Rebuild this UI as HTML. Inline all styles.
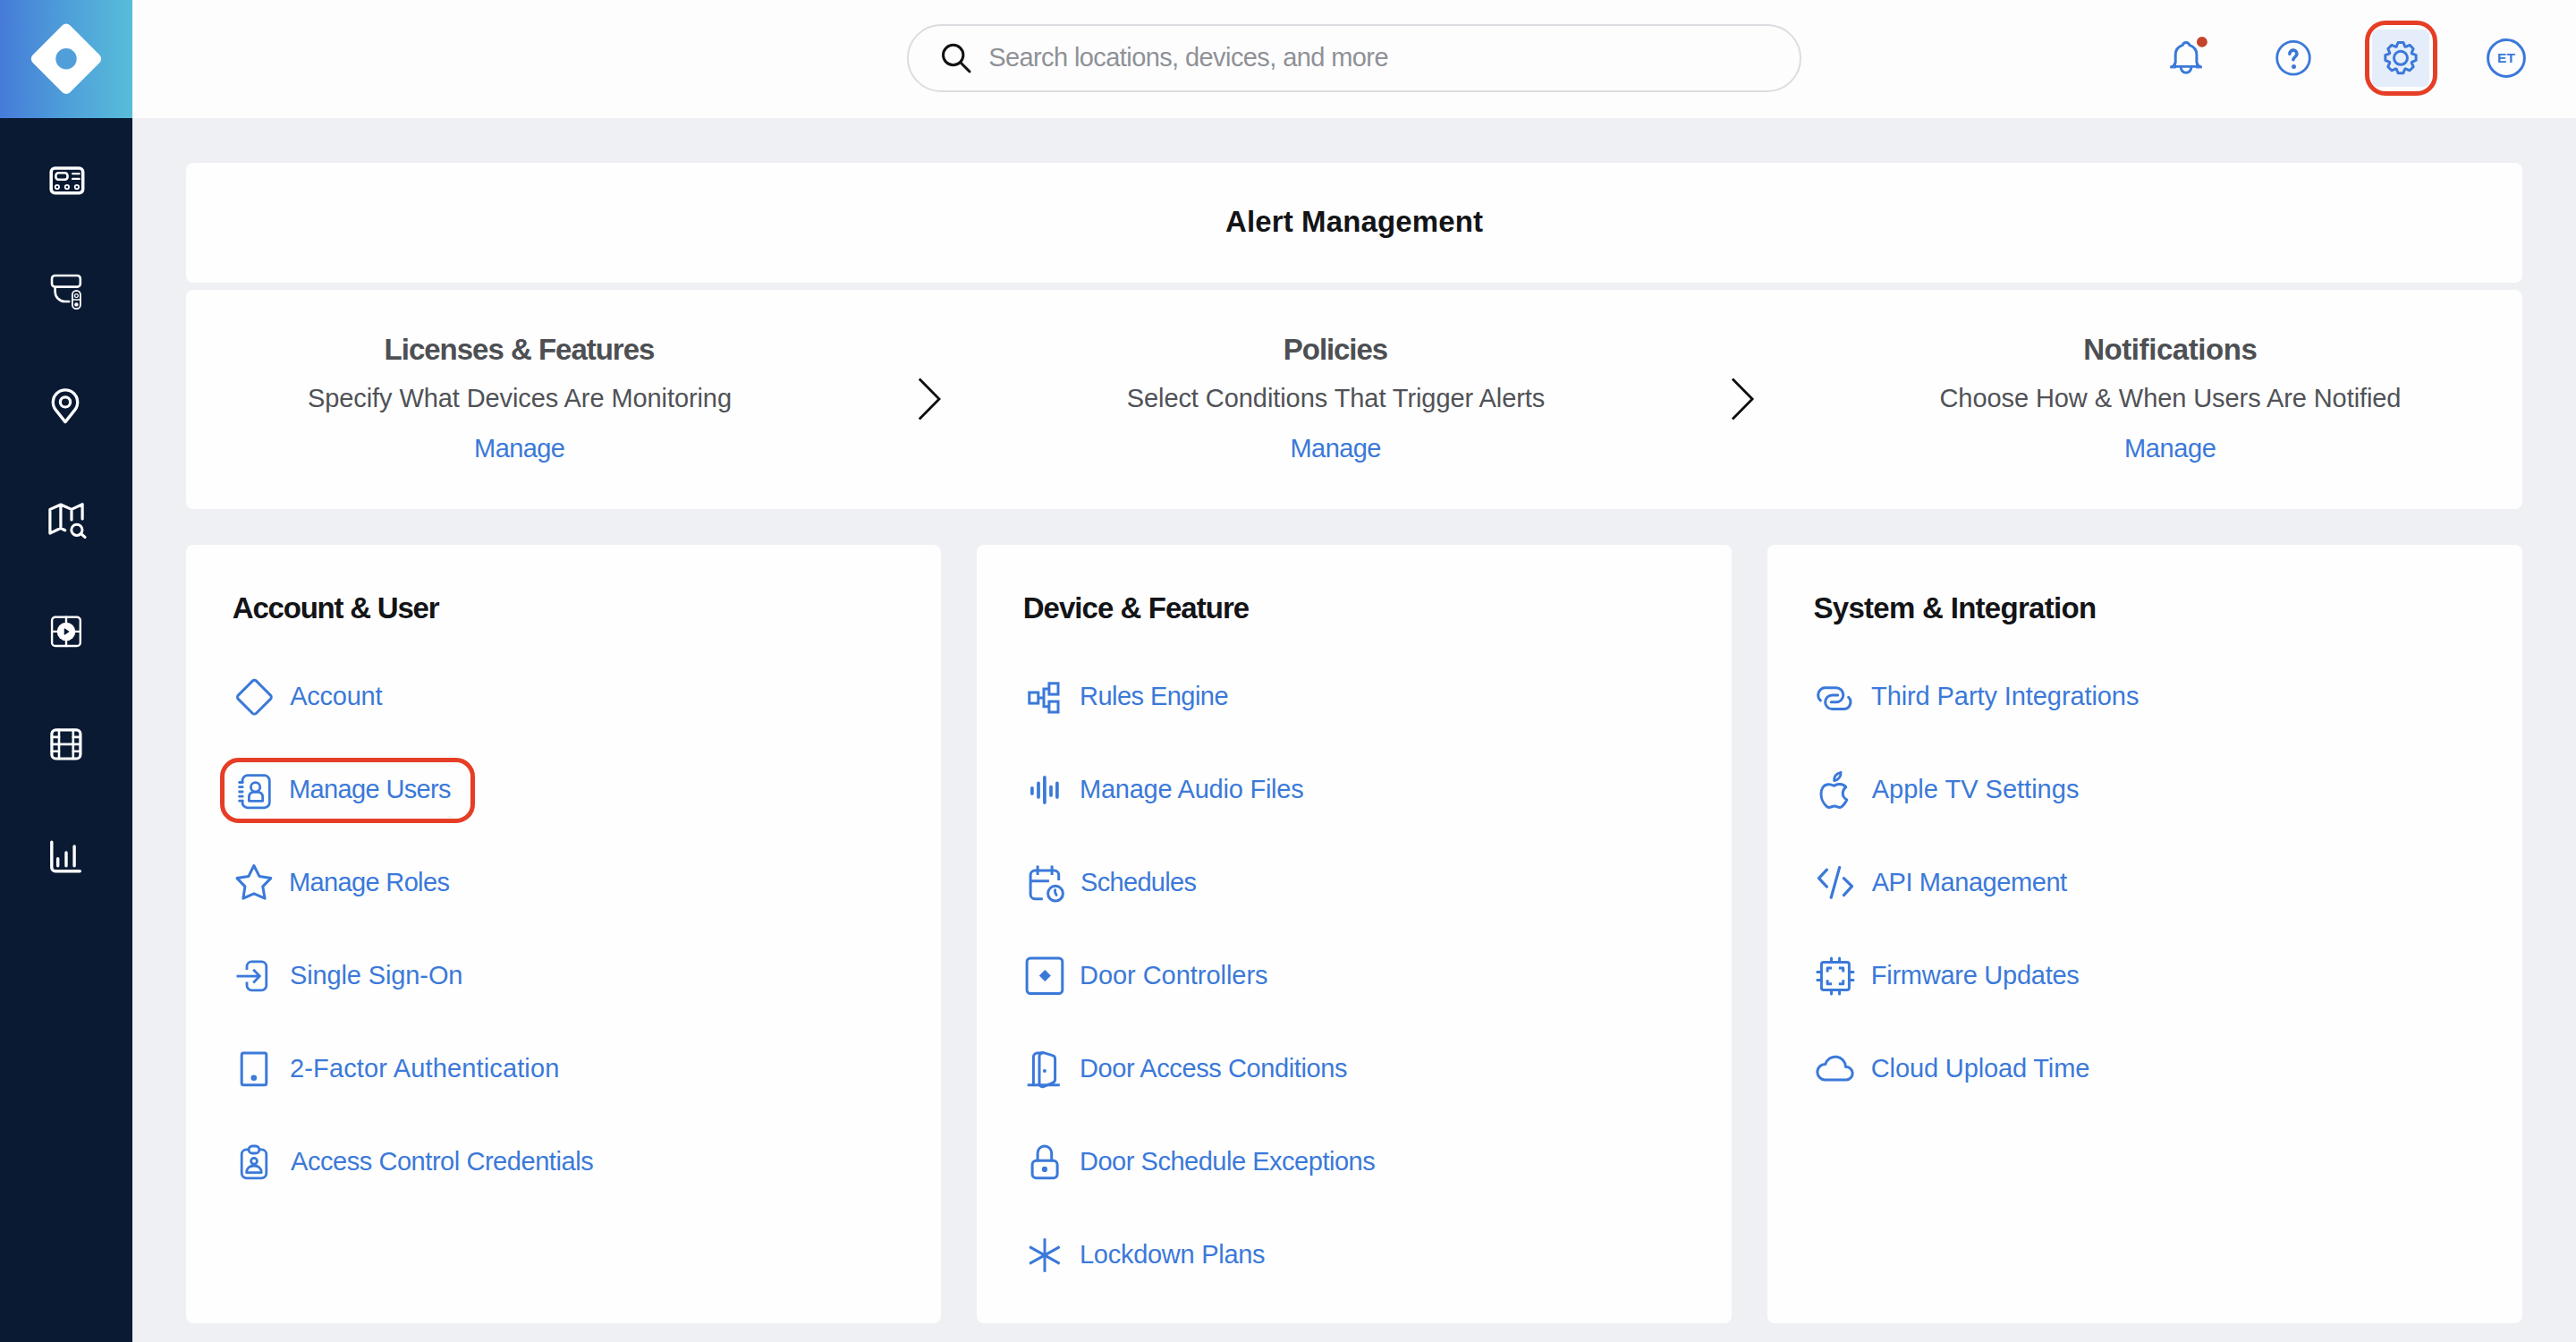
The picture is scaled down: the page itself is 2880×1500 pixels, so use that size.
<!DOCTYPE html>
<html><head><meta charset="utf-8">
<style>
*{box-sizing:border-box;margin:0;padding:0}
html,body{width:2880px;height:1500px;overflow:hidden}
body{position:relative;background:#eff0f3;font-family:"Liberation Sans",sans-serif}
.abs{position:absolute}
#side{left:0;top:0;width:148px;height:1500px;background:#0a1a33}
#logo{left:0;top:0;width:148px;height:132px;background:linear-gradient(90deg,#467bd9 0%,#4e9fd9 50%,#58bdd9 100%)}
#hdr{left:148px;top:0;width:2732px;height:132px;background:#fdfdfe}
#search{left:1014px;top:27px;width:1000px;height:76px;border:2px solid #dcdde1;border-radius:38px;background:#fdfdfe}
.ph{font-size:29px;line-height:29px;color:#8f9196;white-space:nowrap}
.card{background:#fefefe;border-radius:8px}
.t28{font-size:29px;line-height:29px;white-space:nowrap}
.b32{font-size:33px;line-height:33px;font-weight:700;white-space:nowrap}
.blue{color:#3b79d9}
.ctr{text-align:center}
svg{position:absolute;overflow:visible}
.si{fill:none;stroke:#fff;stroke-width:3;stroke-linecap:round;stroke-linejoin:round}
.bi{fill:none;stroke:#3b79d9;stroke-width:3;stroke-linecap:round;stroke-linejoin:round}
</style></head>
<body>
<!-- sidebar -->
<div id="side" class="abs"></div>
<div id="logo" class="abs"></div>
<svg style="left:0;top:0" width="148" height="132" viewBox="0 0 148 132">
  <path d="M74 32.6 L107.2 65.8 L74 99 L40.8 65.8 Z" fill="#fff" stroke="#fff" stroke-width="12" stroke-linejoin="round"/>
  <circle cx="74" cy="65.8" r="11.7" fill="#519fd9"/>
</svg>


<svg class="si" style="left:0;top:0" width="148" height="1000">
  <!-- 1 panel -->
  <rect x="57.2" y="188" width="35.5" height="27.8" rx="4.2" stroke-width="3.5"/>
  <rect x="62.4" y="193.3" width="13.1" height="7.5" rx="3" stroke-width="2.6"/>
  <line x1="81.2" y1="194.1" x2="88.6" y2="194.1" stroke-width="2.4"/>
  <line x1="81.2" y1="199.9" x2="88.6" y2="199.9" stroke-width="2.4"/>
  <circle cx="63.9" cy="209" r="2.2" stroke-width="1.8"/>
  <circle cx="74.9" cy="209" r="2.2" stroke-width="1.8"/>
  <circle cx="85.9" cy="209" r="2.2" stroke-width="1.8"/>
  <!-- 2 camera+doorbell -->
  <rect x="58" y="308" width="31.8" height="12.6" rx="3.4" stroke-width="2.6"/>
  <path d="M61.6 321 V326 A11 11 0 0 0 72.6 337 H77.2" stroke-width="2.6"/>
  <rect x="80.9" y="324.8" width="9" height="20.4" rx="4.5" stroke-width="1.8"/>
  <line x1="80.9" y1="335" x2="89.9" y2="335" stroke-width="1.3"/>
  <circle cx="85.4" cy="330.6" r="1.9" stroke-width="1.2"/>
  <circle cx="85.4" cy="340.4" r="2.2" fill="#fff" stroke="none"/>
  <!-- 3 pin -->
  <path d="M73 471.6 L62.28 458.13 A13.7 13.7 0 1 1 83.72 458.13 Z" stroke-width="3.3"/>
  <circle cx="73" cy="449.4" r="5.6" stroke-width="3.2"/>
  <!-- 4 map -->
  <path d="M55.9 569.4 L67.9 564 L80 569.4 L92.1 563.6 V579.9 M55.9 569.4 V596.1 L67.9 590.3 L72.7 592.7 M67.9 564 V590.3 M80 569.4 V581" stroke-width="3.2"/>
  <circle cx="85.9" cy="592.3" r="6.1" stroke-width="3"/>
  <line x1="90.5" y1="596.5" x2="95.1" y2="600.5" stroke-width="3"/>
  <!-- 5 video -->
  <rect x="58.1" y="689.8" width="31.7" height="32.2" rx="3.8" stroke-width="2.4"/>
  <line x1="74" y1="689.8" x2="74" y2="722" stroke-width="2.4"/>
  <line x1="58.1" y1="705.9" x2="89.8" y2="705.9" stroke-width="2.4"/>
  <circle cx="74" cy="705.9" r="10.25" fill="#fff" stroke="none"/>
  <path d="M72.3 703 L76.6 705.9 L72.3 708.9 Z" fill="#0a1a33" stroke="#0a1a33" stroke-width="1.2"/>
  <!-- 6 film -->
  <rect x="57.9" y="815.8" width="32" height="32.2" rx="4.5" stroke-width="3.2"/>
  <line x1="66" y1="815.8" x2="66" y2="848" stroke-width="2.6"/>
  <line x1="81.8" y1="815.8" x2="81.8" y2="848" stroke-width="2.6"/>
  <line x1="57.9" y1="831.9" x2="89.9" y2="831.9" stroke-width="2.6"/>
  <line x1="57.9" y1="823.9" x2="66" y2="823.9" stroke-width="2.6"/>
  <line x1="57.9" y1="839.7" x2="66" y2="839.7" stroke-width="2.6"/>
  <line x1="81.8" y1="823.9" x2="89.9" y2="823.9" stroke-width="2.6"/>
  <line x1="81.8" y1="839.7" x2="89.9" y2="839.7" stroke-width="2.6"/>
  <!-- 7 chart -->
  <path d="M57.8 941.3 V969.5 A4.2 4.2 0 0 0 62 973.7 H89.3" stroke-width="3.4"/>
  <line x1="64.7" y1="959.8" x2="64.7" y2="967.8" stroke-width="3.4"/>
  <line x1="74" y1="953" x2="74" y2="967.8" stroke-width="3.4"/>
  <line x1="83.1" y1="946" x2="83.1" y2="967.8" stroke-width="3.4"/>
</svg>

<!-- header -->
<div id="hdr" class="abs"></div>
<div id="search" class="abs"></div>
<svg style="left:0;top:0" width="2880" height="132">
  <circle cx="1065.7" cy="61.5" r="11.2" fill="none" stroke="#111" stroke-width="3"/>
  <line x1="1074.5" y1="70.5" x2="1084" y2="80" stroke="#111" stroke-width="3" stroke-linecap="round"/>
</svg>
<div class="abs ph" style="left:1105.20px;top:50.4px;letter-spacing:-0.592px">Search locations, devices, and more</div>

<!-- cards -->
<div class="abs card" style="left:208px;top:182px;width:2612px;height:134px"></div>
<div class="abs card" style="left:208px;top:324px;width:2612px;height:245px"></div>
<div class="abs card" style="left:208px;top:609px;width:844px;height:870px"></div>
<div class="abs card" style="left:1092px;top:609px;width:844px;height:870px"></div>
<div class="abs card" style="left:1976px;top:609px;width:844px;height:870px"></div>

<div class="abs b32 ctr" style="left:1214.07px;width:600px;top:230.90px;color:#131417;letter-spacing:0.133px">Alert Management</div>

<div class="abs b32 ctr" style="left:280.50px;width:600px;top:373.90px;color:#4d4f53;letter-spacing:-1.011px">Licenses &amp; Features</div>
<div class="abs t28 ctr" style="left:280.96px;width:600px;top:431.3px;color:#505257;letter-spacing:-0.088px">Specify What Devices Are Monitoring</div>
<div class="abs t28 ctr blue" style="left:280.70px;width:600px;top:487.30px;letter-spacing:-0.600px">Manage</div>

<div class="abs b32 ctr" style="left:1192.96px;width:600px;top:373.90px;color:#4d4f53;letter-spacing:-1.071px">Policies</div>
<div class="abs t28 ctr" style="left:1193.46px;width:600px;top:431.3px;color:#505257;letter-spacing:-0.070px">Select Conditions That Trigger Alerts</div>
<div class="abs t28 ctr blue" style="left:1193.22px;width:600px;top:487.30px;letter-spacing:-0.560px">Manage</div>

<div class="abs b32 ctr" style="left:2126.29px;width:600px;top:373.90px;color:#4d4f53;letter-spacing:-0.441px">Notifications</div>
<div class="abs t28 ctr" style="left:2126.46px;width:600px;top:431.3px;color:#505257;letter-spacing:-0.086px">Choose How &amp; When Users Are Notified</div>
<div class="abs t28 ctr blue" style="left:2126.31px;width:600px;top:487.30px;letter-spacing:-0.380px">Manage</div>

<svg style="left:0;top:0" width="2880" height="600">
  <polyline points="1027.8,423.5 1050,446 1027.8,468.5" fill="none" stroke="#0d0d0f" stroke-width="2.8"/>
  <polyline points="1936.9,423.5 1959.1,446 1936.9,468.5" fill="none" stroke="#0d0d0f" stroke-width="2.8"/>
</svg>

<!-- column headings -->
<div class="abs b32" style="left:259.80px;top:662.90px;color:#131417;letter-spacing:-1.216px">Account &amp; User</div>
<div class="abs b32" style="left:1143.70px;top:662.90px;color:#131417;letter-spacing:-0.953px">Device &amp; Feature</div>
<div class="abs b32" style="left:2027.50px;top:662.90px;color:#131417;letter-spacing:-0.711px">System &amp; Integration</div>

<!-- items col1 -->
<div class="abs t28 blue" style="left:324.20px;top:764.3px;letter-spacing:-0.234px">Account</div>
<div class="abs t28 blue" style="left:323.00px;top:868.3px;letter-spacing:-0.636px">Manage Users</div>
<div class="abs t28 blue" style="left:323.00px;top:972.3px;letter-spacing:-0.646px">Manage Roles</div>
<div class="abs t28 blue" style="left:324.00px;top:1076.3px;letter-spacing:-0.123px">Single Sign-On</div>
<div class="abs t28 blue" style="left:324.00px;top:1180.3px;letter-spacing:0.141px">2-Factor Authentication</div>
<div class="abs t28 blue" style="left:325.00px;top:1284.3px;letter-spacing:-0.444px">Access Control Credentials</div>

<!-- items col2 -->
<div class="abs t28 blue" style="left:1207.00px;top:764.3px;letter-spacing:-0.545px">Rules Engine</div>
<div class="abs t28 blue" style="left:1207.00px;top:868.3px;letter-spacing:-0.235px">Manage Audio Files</div>
<div class="abs t28 blue" style="left:1208.00px;top:972.3px;letter-spacing:-0.675px">Schedules</div>
<div class="abs t28 blue" style="left:1207.00px;top:1076.3px;letter-spacing:-0.040px">Door Controllers</div>
<div class="abs t28 blue" style="left:1207.00px;top:1180.3px;letter-spacing:-0.400px">Door Access Conditions</div>
<div class="abs t28 blue" style="left:1207.00px;top:1284.3px;letter-spacing:-0.479px">Door Schedule Exceptions</div>
<div class="abs t28 blue" style="left:1207.00px;top:1388.3px;letter-spacing:-0.277px">Lockdown Plans</div>

<!-- items col3 -->
<div class="abs t28 blue" style="left:2092.00px;top:764.3px;letter-spacing:-0.087px">Third Party Integrations</div>
<div class="abs t28 blue" style="left:2092.70px;top:868.3px;letter-spacing:0.006px">Apple TV Settings</div>
<div class="abs t28 blue" style="left:2092.70px;top:972.3px;letter-spacing:-0.431px">API Management</div>
<div class="abs t28 blue" style="left:2091.80px;top:1076.3px;letter-spacing:-0.260px">Firmware Updates</div>
<div class="abs t28 blue" style="left:2091.80px;top:1180.3px;letter-spacing:-0.131px">Cloud Upload Time</div>


<svg class="bi" style="left:0;top:0" width="2880" height="132" stroke-width="2.7">
  <!-- bell -->
  <path d="M2431 72.2 L2432.2 69.6 V61 C2432.2 55.5 2435.5 52 2440.3 50.3 A3.9 3.9 0 0 1 2447.8 50.3 C2452.6 52 2455.9 55.5 2455.9 61 V69.6 L2457.1 72.2"/>
  <path d="M2427.6 74.4 H2460.4" stroke-width="2.8"/>
  <path d="M2426.5 75.6 L2432.6 69.2 V75.6 Z M2461.5 75.6 L2455.5 69.2 V75.6 Z" fill="#3b79d9" stroke-width="1"/>
  <path d="M2438.3 75.5 A5.75 5.75 0 0 0 2449.8 75.5"/>
  <circle cx="2461.9" cy="46.9" r="5.95" fill="#c4432a" stroke="none"/>
  <!-- help -->
  <circle cx="2564" cy="64.75" r="18.3" stroke-width="2.8"/>
  <path d="M2559.9 60.3 A4 4 0 1 1 2567.6 61.6 C2566.8 63.3 2563.9 64.5 2563.9 66.8" stroke-width="3.6" stroke-linecap="round"/>
  <circle cx="2564.5" cy="74.4" r="2.5" fill="#3b79d9" stroke="none"/>
</svg>
<div class="abs" style="left:2644px;top:23px;width:81px;height:84px;border:5px solid #e63e26;border-radius:23px"></div>
<div class="abs" style="left:2652px;top:33px;width:64px;height:64px;background:#e4edf9;border-radius:7px"></div>
<svg class="bi" style="left:0;top:0" width="2880" height="132" stroke-width="2.8">
  <path d="M2679.20 52.09 L2681.13 47.44 L2686.87 47.44 L2688.80 52.09 L2689.45 52.36 L2694.10 50.43 L2698.17 54.50 L2696.24 59.15 L2696.51 59.80 L2701.16 61.73 L2701.16 67.47 L2696.51 69.40 L2696.24 70.05 L2698.17 74.70 L2694.10 78.77 L2689.45 76.84 L2688.80 77.11 L2686.87 81.76 L2681.13 81.76 L2679.20 77.11 L2678.55 76.84 L2673.90 78.77 L2669.83 74.70 L2671.76 70.05 L2671.49 69.40 L2666.84 67.47 L2666.84 61.73 L2671.49 59.80 L2671.76 59.15 L2669.83 54.50 L2673.90 50.43 L2678.55 52.36 Z"/>
  <circle cx="2684" cy="64.8" r="7.5"/>
  <circle cx="2802" cy="65" r="20.4" stroke-width="3"/>
</svg>
<div class="abs" style="left:2772px;top:57px;width:60px;text-align:center;font-size:15.5px;line-height:16px;font-weight:700;color:#3b79d9">ET</div>

<svg class="bi" style="left:0;top:0" width="2880" height="1500" stroke-width="2.9">
  <!-- col1 -->
  <rect x="270.15" y="764.95" width="28.5" height="28.5" rx="3" transform="rotate(45 284.4 779.2)" stroke-width="3"/>
  <!-- manage users -->
  <path d="M271 874.5 V872.5 A5.8 5.8 0 0 1 276.8 866.7 H295.5 A5.8 5.8 0 0 1 301.3 872.5 V897 A5.8 5.8 0 0 1 295.5 902.8 H276.8 A5.8 5.8 0 0 1 271 897 V895.2" stroke-width="2.8"/>
  <path d="M267.6 874.5 H271.2 M267.6 879.7 H271.2 M267.6 885 H271.2 M267.6 890.2 H271.2 M267.6 895.2 H271.2" stroke-width="2.8"/>
  <circle cx="285.6" cy="879.8" r="5.2" stroke-width="2.8"/>
  <path d="M278.4 895.3 V890.6 A5.3 5.3 0 0 1 283.7 885.3 H288.4 A5.3 5.3 0 0 1 293.7 890.6 V895.3 Z" stroke-width="2.8"/>
  <!-- star -->
  <path d="M283.9 967.5 L289.9 979.4 L302.8 981.6 L293.8 990.9 L296.1 1004.2 L283.9 998.8 L271.9 1004.2 L273.9 990.9 L265 981.6 L278 979.4 Z" stroke-width="3"/>
  <!-- sign on -->
  <path d="M276 1084 V1080.4 A5.5 5.5 0 0 1 281.5 1074.9 H292.3 A5.5 5.5 0 0 1 297.8 1080.4 V1101.4 A5.5 5.5 0 0 1 292.3 1106.9 H281.5 A5.5 5.5 0 0 1 276 1101.4 V1097.6" stroke-width="2.8" stroke-linecap="butt"/>
  <path d="M264.6 1091.1 H290" stroke-width="2.8" stroke-linecap="butt"/>
  <path d="M283.2 1083.8 L290.3 1091.1 L283.2 1098.4" stroke-width="2.8" stroke-linecap="butt" stroke-linejoin="miter"/>
  <!-- 2fa -->
  <rect x="270.2" y="1176.9" width="27.6" height="35.9" rx="2" stroke-width="3"/>
  <circle cx="283.8" cy="1204.8" r="3.3" fill="#3b79d9" stroke="none"/>
  <!-- access control -->
  <path d="M278 1284.9 H275.7 A5.5 5.5 0 0 0 270.2 1290.4 V1311.3 A5.5 5.5 0 0 0 275.7 1316.8 H292.3 A5.5 5.5 0 0 0 297.8 1311.3 V1290.4 A5.5 5.5 0 0 0 292.3 1284.9 H290" stroke-width="2.8"/>
  <rect x="278" y="1281" width="11.9" height="8" rx="4" stroke-width="2.8"/>
  <circle cx="284" cy="1297.8" r="3.4" stroke-width="2.8"/>
  <path d="M275.6 1310.6 C275.6 1306 279 1303 284 1303 C289 1303 292.3 1306 292.3 1310.6 Z" stroke-width="2.8"/>

  <!-- col2 rules engine -->
  <rect x="1150.8" y="774" width="10" height="12.1" stroke-width="3" stroke-linejoin="miter"/>
  <rect x="1172.9" y="763.8" width="10.1" height="12.3" stroke-width="3" stroke-linejoin="miter"/>
  <rect x="1172.9" y="784.1" width="10.1" height="11.9" stroke-width="3" stroke-linejoin="miter"/>
  <path d="M1160.8 780 H1167 M1172.9 770.1 H1167 V789.8 H1172.9" stroke-width="3" stroke-linecap="butt" stroke-linejoin="miter"/>
  <!-- audio -->
  <path d="M1153.9 880.9 V887.1 M1161 875.3 V891 M1167.9 868.8 V897.1 M1175 879.6 V888.9 M1181.9 875.3 V891" stroke-width="3.7"/>
  <!-- schedules -->
  <path d="M1183.7 984 V978 A5 5 0 0 0 1178.7 973 H1157.1 A5 5 0 0 0 1152.1 978 V999.7 A5 5 0 0 0 1157.1 1004.7 H1165.8" stroke-width="3" stroke-linecap="butt"/>
  <path d="M1160.1 967.6 V978 M1176.1 967.6 V978 M1152.1 984.7 H1172.9" stroke-width="3" stroke-linecap="butt"/>
  <circle cx="1180" cy="998.7" r="8.4" stroke-width="3"/>
  <path d="M1179.6 994.6 V997.5 L1181.1 1000.5" stroke-width="2.8"/>
  <!-- door controllers -->
  <rect x="1148.1" y="1071" width="39.7" height="39.6" rx="4" stroke-width="3"/>
  <path d="M1168.3 1084 L1174.8 1090.5 L1168.3 1097 L1161.8 1090.5 Z" fill="#3b79d9" stroke="none"/>
  <!-- door access -->
  <path d="M1155.4 1212.8 V1181.5 A4.5 4.5 0 0 1 1159.9 1177 H1165.5" stroke-width="3"/>
  <path d="M1162 1211.5 V1180.5 A4 4 0 0 1 1166.5 1176.6 L1176.5 1179.6 A4 4 0 0 1 1179.6 1183.5 V1206.5 A4 4 0 0 1 1176.8 1210.3 L1166.5 1214.6 A3.5 3.5 0 0 1 1162 1211.5 Z" stroke-width="3"/>
  <path d="M1148.7 1212.8 H1184.8" stroke-width="3" stroke-linecap="butt"/>
  <circle cx="1167.9" cy="1197" r="2" fill="#3b79d9" stroke="none"/>
  <!-- lock -->
  <rect x="1154.1" y="1297.2" width="28" height="19.6" rx="4.5" stroke-width="3"/>
  <path d="M1160.1 1297 V1288.8 A7.8 7.8 0 0 1 1175.7 1288.8 V1297" stroke-width="3"/>
  <circle cx="1167.9" cy="1306.9" r="3.1" fill="#3b79d9" stroke="none"/>
  <!-- asterisk -->
  <path d="M1168 1384.3 V1421.7 M1151.1 1393.6 L1184.7 1412.4 M1151.1 1412.4 L1184.7 1393.6" stroke-width="3" stroke-linecap="butt"/>

  <!-- col3 third party -->
  <path d="M2035.3 782.9 A8.2 8.2 0 0 1 2041.5 768.8 H2052.8 A8 8 0 0 1 2052.8 784.8 H2047.2" stroke-width="3"/>
  <path d="M2054.7 777 H2048.4 A7.8 7.8 0 0 0 2048.4 792.6 H2061 A7.8 7.8 0 0 0 2066.6 779.3" stroke-width="3"/>
  <!-- apple -->
  <path d="M2050.2 878.3 C2048 877 2045.5 876.5 2043.5 876.8 C2038.5 877.5 2036 882 2036 887.5 C2036 893 2039 899 2043 902 C2046 903.5 2048 901 2051 901 C2054 901 2056 903.5 2058.5 902 C2061 900.5 2063.5 896.5 2064.8 894 C2061.5 892 2060 889 2060.3 886 C2060.5 883 2062 881 2063.8 879.7 C2061.5 877 2058.5 876.3 2056 876.6 C2054 876.8 2052 877.5 2050.2 878.3 Z" stroke-width="3"/>
  <path d="M2050.6 872.6 C2050.3 868 2053.2 864.6 2058.1 863.3 C2058.5 867.8 2055.5 871.7 2050.6 872.6 Z" stroke-width="2.8"/>
  <!-- api -->
  <path d="M2042.4 972.2 L2033.5 981.6 L2042.4 991.1 M2056.6 969.6 L2047.2 1003.2 M2061.4 981.6 L2070.5 990.7 L2061.4 1000.6" stroke-width="3.2"/>
  <!-- firmware -->
  <rect x="2036.4" y="1075.4" width="31" height="31" rx="2.5" stroke-width="3"/>
  <path d="M2047.5 1071 V1075.4 M2056.5 1071 V1075.4 M2047.5 1106.4 V1111 M2056.5 1106.4 V1111 M2031.8 1086.4 H2036.4 M2031.8 1095.4 H2036.4 M2067.4 1086.4 H2072 M2067.4 1095.4 H2072" stroke-width="3"/>
  <path d="M2043.1 1086.5 V1082.1 H2048 M2055.8 1082.1 H2060.7 V1086.5 M2043.1 1095.3 V1099.7 H2048 M2055.8 1099.7 H2060.7 V1095.3" stroke-width="3" stroke-linecap="butt"/>
  <!-- cloud -->
  <path d="M2040.2 1206.9 A8.4 8.4 0 0 1 2040.8 1189.5 A11.6 11.6 0 0 1 2063.5 1192.5 A7.2 7.2 0 0 1 2064.4 1206.9 Z" stroke-width="3"/>
</svg>
<div class="abs" style="left:246px;top:847px;width:285px;height:73px;border:5px solid #e63e26;border-radius:21px"></div>

</body></html>
